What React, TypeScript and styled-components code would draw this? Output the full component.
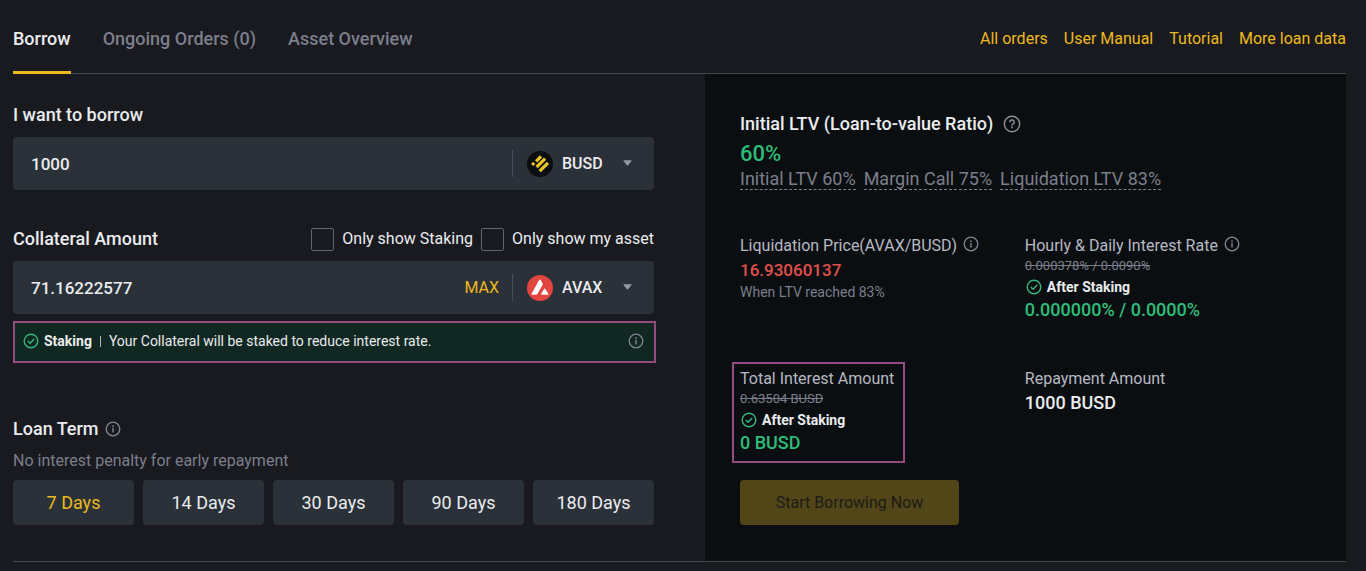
import React, { useState } from "react";
import styled, { createGlobalStyle } from "styled-components";

const color = {
  page: "#191a1f",
  panel: "#0b0e11",
  field: "#2b3139",
  line: "#44464b",
  text: "#eaecef",
  soft: "#b7b9c2",
  muted: "#7b7f8b",
  gold: "#edb91c",
  green: "#2ebd78",
  red: "#e0504c",
  mark: "#954a80",
};

const GlobalStyle = createGlobalStyle`
  *, *::before, *::after { box-sizing: border-box; }
  body {
    margin: 0;
    background: ${color.page};
    color: ${color.text};
    font-family: Roboto, "Liberation Sans", sans-serif;
    font-size: 16px;
    line-height: 20px;
  }
  button, input, select { font: inherit; color: inherit; }
  p, h2, dl, dd, dt { margin: 0; }
`;

const Page = styled.div`
  padding: 0 20px 0 13px;
`;

const Header = styled.header`
  display: flex;
  justify-content: space-between;
  height: 74px;
  border-bottom: 1px solid ${color.line};
`;

const Tabs = styled.nav`
  display: flex;
  gap: 32px;
`;

const Tab = styled.button<{ $active?: boolean }>`
  height: 74px;
  padding: 6px 0 0;
  border: 0;
  border-bottom: 3px solid ${(p) => (p.$active ? color.gold : "transparent")};
  background: none;
  color: ${(p) => (p.$active ? color.text : color.muted)};
  font-size: 18px;
  font-weight: 500;
  cursor: pointer;
`;

const Links = styled.nav`
  display: flex;
  align-items: center;
  gap: 16px;
  padding-top: 4px;
`;

const GoldLink = styled.a`
  color: ${color.gold};
  text-decoration: none;
`;

const Main = styled.main`
  display: grid;
  grid-template-columns: minmax(0, 1fr) minmax(0, 1fr);
  column-gap: 51px;
  border-bottom: 1px solid ${color.line};
`;

const Form = styled.form`
  padding: 29px 0 36px;
`;

const Title = styled.h2<{ $gap?: number }>`
  display: flex;
  align-items: center;
  gap: ${(p) => p.$gap ?? 6}px;
  font-size: 18px;
  line-height: 24px;
  font-weight: 500;
`;

const TitleLabel = styled.label`
  font-size: 18px;
  line-height: 24px;
  font-weight: 500;
`;

const FieldHead = styled.div`
  display: flex;
  align-items: center;
  justify-content: space-between;
  height: 24px;
  margin-bottom: 10px;
`;

const Field = styled.div`
  display: flex;
  align-items: center;
  height: 53px;
  padding: 0 14px 0 18px;
  border-radius: 4px;
  background: ${color.field};
`;

const AmountInput = styled.input`
  flex: 1;
  min-width: 0;
  padding: 0;
  border: 0;
  outline: 0;
  background: none;
  font-size: 17px;
  font-weight: 500;
`;

const MaxButton = styled.button`
  padding: 0;
  margin-right: 13px;
  border: 0;
  background: none;
  color: ${color.gold};
  cursor: pointer;
`;

const Asset = styled.div`
  position: relative;
  display: flex;
  align-items: center;
  gap: 9px;
  height: 27px;
  padding-left: 14px;
  border-left: 1px solid #474d57;
`;

const AssetSelect = styled.select`
  appearance: none;
  width: 78px;
  padding: 0;
  border: 0;
  outline: 0;
  background: none;
  font-weight: 500;
  cursor: pointer;
`;

const Caret = styled.svg`
  position: absolute;
  right: 8px;
  top: 10px;
  pointer-events: none;
`;

const Checks = styled.div`
  display: flex;
  gap: 8px;
`;

const CheckLabel = styled.label`
  display: flex;
  align-items: center;
  gap: 8px;
`;

const CheckBox = styled.input`
  appearance: none;
  width: 23px;
  height: 23px;
  margin: 0;
  border: 1px solid #5e6673;
  border-radius: 2px;
  &:checked { background: ${color.gold}; }
`;

const Section = styled.div`
  margin-top: 37px;
`;

const StakingNote = styled.div`
  display: flex;
  align-items: center;
  gap: 5px;
  height: 42px;
  margin: 7px -2px 54px 0;
  padding: 0 10px 2px 8px;
  border: 2px solid ${color.mark};
  background: #112721;
  font-size: 14px;
  svg:last-child { margin-left: auto; }
`;

const Separator = styled.span`
  width: 1px;
  height: 11px;
  margin: 0 3px;
  background: #aeb4bc;
`;

const Hint = styled.p`
  margin: 10px 0 9px;
  color: ${color.muted};
`;

const Terms = styled.div`
  display: grid;
  grid-template-columns: repeat(5, 1fr);
  gap: 9px;
`;

const TermButton = styled.button<{ $active: boolean }>`
  height: 45px;
  padding: 0;
  border: 0;
  border-radius: 4px;
  background: ${color.field};
  color: ${(p) => (p.$active ? color.gold : color.text)};
  font-size: 18px;
  cursor: pointer;
`;

const Summary = styled.section`
  padding: 38px 0 36px 35px;
  background: ${color.panel};
`;

const Ltv = styled.p`
  margin-top: 4px;
  color: ${color.green};
  font-size: 22px;
  line-height: 28px;
  font-weight: 500;
`;

const Levels = styled.div`
  display: flex;
  gap: 8px;
`;

const Level = styled.span`
  border-bottom: 1px dashed ${color.muted};
  color: ${color.muted};
  font-size: 18px;
  line-height: 21px;
`;

const Stats = styled.dl`
  display: grid;
  grid-template-columns: 47% 1fr;
  row-gap: 47px;
  margin: 46px 0 25px;
`;

const Stat = styled.div<{ $marked?: boolean }>`
  ${(p) =>
    p.$marked &&
    `
    justify-self: start;
    margin: -7px 0 -8px -8px;
    padding: 5px 9px 6px 6px;
    border: 2px solid ${color.mark};
  `}
`;

const StatLabel = styled.dt`
  display: flex;
  gap: 6px;
  height: 20px;
  margin-bottom: 2px;
  color: ${color.soft};
  white-space: nowrap;
`;

const OldValue = styled.dd`
  color: ${color.muted};
  font-size: 13px;
  line-height: 16px;
  text-decoration: line-through;
`;

const AfterStaking = styled.dd`
  display: flex;
  align-items: center;
  gap: 5px;
  height: 22px;
  margin-top: 2px;
  padding-left: 1px;
  font-size: 14px;
  font-weight: 700;
`;

const Value = styled.dd<{ $tone?: string; $size?: number }>`
  color: ${(p) => p.$tone || color.text};
  font-size: ${(p) => p.$size ?? 18}px;
  line-height: 24px;
  font-weight: 500;
`;

const Note = styled.dd`
  margin-top: 2px;
  color: ${color.muted};
  font-size: 14px;
  line-height: 16px;
`;

const Submit = styled.button`
  display: block;
  width: 219px;
  height: 45px;
  border: 0;
  border-radius: 4px;
  background: #524619;
  color: #1c1b17;
`;

const InfoIcon = () => (
  <svg width="16" height="16" viewBox="0 0 16 16" fill="none" aria-hidden="true">
    <circle cx="8" cy="8" r="6.8" stroke="#7f8591" strokeWidth="1.3" />
    <path d="M7.2 4.4h1.6v1.5H7.2zM7.3 7h1.4v4.6H7.3z" fill="#7f8591" />
  </svg>
);

const HelpIcon = () => (
  <svg width="18" height="18" viewBox="0 0 18 18" fill="none" stroke="#8a8f99" aria-hidden="true">
    <circle cx="9" cy="9" r="7.7" strokeWidth="1.4" />
    <path d="M6.7 7.2a2.3 2.1 0 1 1 3.5 1.7c-.8.5-1.2.8-1.2 1.6" strokeWidth="1.5" />
    <path d="M9 11.6v1.7" strokeWidth="1.7" />
  </svg>
);

const CheckIcon = () => (
  <svg width="16" height="16" viewBox="0 0 16 16" fill="none" stroke="#35b47b" aria-hidden="true">
    <circle cx="8" cy="8" r="6.8" strokeWidth="1.4" />
    <path d="M4.8 8l2.3 2.3 4.1-4.2" strokeWidth="1.5" />
  </svg>
);

const BusdLogo = () => (
  <svg width="26" height="26" viewBox="0 0 26 26" aria-hidden="true">
    <circle cx="13" cy="13" r="13" fill="#0b0e11" />
    <path
      d="M9.100 10.300l4.900-4.900M9.600 16.200l8.500-8.500M12.700 20.100l8.300-8.300"
      stroke="#e8c425"
      strokeWidth="3.200"
    />
    <path d="M6.200 10.800l2.100 2.100-2.100 2.100-2.100-2.100z" fill="#e8c425" />
  </svg>
);

const AvaxLogo = () => (
  <svg width="26" height="26" viewBox="0 0 26 26" aria-hidden="true">
    <circle cx="13" cy="13" r="13" fill="#e2453f" />
    <path
      d="M12 5.200q.9-1.300 1.800 0l1.700 3q.5 1-.1 2.100l-4.900 8.500q-.6 1-1.700 1H5.500q-1.500 0-.8-1.300zM16.900 14.200q.8-1.200 1.600 0l2.900 4.600q.5 1-.7 1h-5.800q-1.300 0-.7-1z"
      fill="#fff"
    />
  </svg>
);

interface AssetPickerProps {
  label: string;
  value: string;
  logo: React.ReactNode;
}

const AssetPicker = ({ label, value, logo }: AssetPickerProps) => (
  <Asset>
    {logo}
    <AssetSelect aria-label={label} defaultValue={value}>
      <option>{value}</option>
    </AssetSelect>
    <Caret width="9" height="6" viewBox="0 0 10 6" aria-hidden="true">
      <path d="M1 0h8q1 0 .4.800L5.700 5.500q-.7.700-1.400 0L.6.800Q0 0 1 0z" fill="#929aa5" />
    </Caret>
  </Asset>
);

const terms = [7, 14, 30, 90, 180];

const SummaryPanel = () => (
  <Summary>
    <Title $gap={10}>
      Initial LTV (Loan-to-value Ratio) <HelpIcon />
    </Title>
    <Ltv>60%</Ltv>
    <Levels>
      <Level>Initial LTV 60%</Level>
      <Level>Margin Call 75%</Level>
      <Level>Liquidation LTV 83%</Level>
    </Levels>
    <Stats>
      <Stat>
        <StatLabel>
          Liquidation Price(AVAX/BUSD) <InfoIcon />
        </StatLabel>
        <Value $tone={color.red} $size={17}>16.93060137</Value>
        <Note>When LTV reached 83%</Note>
      </Stat>
      <Stat>
        <StatLabel>
          Hourly &amp; Daily Interest Rate <InfoIcon />
        </StatLabel>
        <OldValue>0.000378% / 0.0090%</OldValue>
        <AfterStaking>
          <CheckIcon /> After Staking
        </AfterStaking>
        <Value $tone={color.green}>0.000000% / 0.0000%</Value>
      </Stat>
      <Stat $marked>
        <StatLabel>Total Interest Amount</StatLabel>
        <OldValue>0.63504 BUSD</OldValue>
        <AfterStaking>
          <CheckIcon /> After Staking
        </AfterStaking>
        <Value $tone={color.green}>0 BUSD</Value>
      </Stat>
      <Stat>
        <StatLabel>Repayment Amount</StatLabel>
        <Value>1000 BUSD</Value>
      </Stat>
    </Stats>
    <Submit type="button" disabled>
      Start Borrowing Now
    </Submit>
  </Summary>
);

export default function App() {
  const [term, setTerm] = useState(7);

  return (
    <>
      <GlobalStyle />
      <Page>
        <Header>
          <Tabs>
            <Tab $active>Borrow</Tab>
            <Tab>Ongoing Orders (0)</Tab>
            <Tab>Asset Overview</Tab>
          </Tabs>
          <Links>
            <GoldLink href="#orders">All orders</GoldLink>
            <GoldLink href="#manual">User Manual</GoldLink>
            <GoldLink href="#tutorial">Tutorial</GoldLink>
            <GoldLink href="#data">More loan data</GoldLink>
          </Links>
        </Header>
        <Main>
          <Form onSubmit={(e) => e.preventDefault()}>
            <FieldHead>
              <TitleLabel htmlFor="borrow">I want to borrow</TitleLabel>
            </FieldHead>
            <Field>
              <AmountInput id="borrow" defaultValue="1000" />
              <AssetPicker label="Borrowed asset" value="BUSD" logo={<BusdLogo />} />
            </Field>
            <Section>
              <FieldHead>
                <TitleLabel htmlFor="collateral">Collateral Amount</TitleLabel>
                <Checks>
                  <CheckLabel>
                    <CheckBox type="checkbox" />
                    Only show Staking
                  </CheckLabel>
                  <CheckLabel>
                    <CheckBox type="checkbox" />
                    Only show my asset
                  </CheckLabel>
                </Checks>
              </FieldHead>
              <Field>
                <AmountInput id="collateral" defaultValue="71.16222577" />
                <MaxButton type="button">MAX</MaxButton>
                <AssetPicker label="Collateral asset" value="AVAX" logo={<AvaxLogo />} />
              </Field>
            </Section>
            <StakingNote>
              <CheckIcon />
              <strong>Staking</strong>
              <Separator />
              <span>Your Collateral will be staked to reduce interest rate.</span>
              <InfoIcon />
            </StakingNote>
            <Title>
              Loan Term <InfoIcon />
            </Title>
            <Hint>No interest penalty for early repayment</Hint>
            <Terms>
              {terms.map((days) => (
                <TermButton
                  key={days}
                  type="button"
                  $active={days === term}
                  onClick={() => setTerm(days)}
                >
                  {days} Days
                </TermButton>
              ))}
            </Terms>
          </Form>
          <SummaryPanel />
        </Main>
      </Page>
    </>
  );
}
